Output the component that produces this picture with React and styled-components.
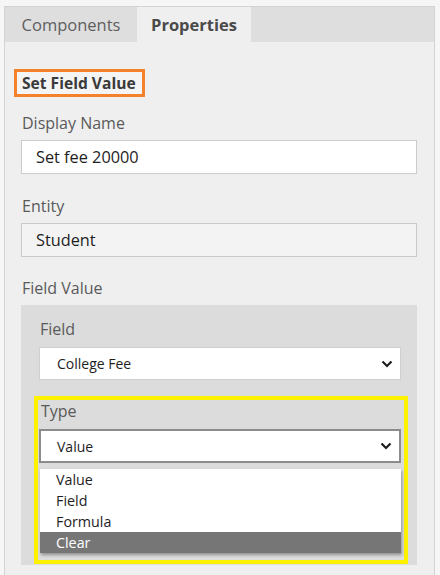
import React from "react";
import styled, { createGlobalStyle } from "styled-components";

const Global = createGlobalStyle`
  html, body { margin: 0; padding: 0; background: #f6f6f6; }
  body { font-family: "Open Sans", "Noto Sans", sans-serif; }
  * { box-sizing: border-box; }
`;

const Page = styled.div`
  width: 440px;
  height: 575px;
  padding: 6px 5px 0 4px;
  overflow: hidden;
`;

const Panel = styled.div`
  width: 431px;
  height: 580px;
  border: 1px solid #d3d3d3;
  border-bottom: none;
  background: #efefef;
  display: flex;
  flex-direction: column;
`;

const TabBar = styled.div`
  display: flex;
  height: 35px;
  background: #dedede;
`;

const Tab = styled.div`
  width: ${(p) => p.$w}px;
  display: flex;
  align-items: center;
  justify-content: center;
  font-size: 16.5px;
  color: ${(p) => (p.$active ? "#4a4a4a" : "#5e5e5e")};
  font-weight: ${(p) => (p.$active ? 700 : 400)};
  background: ${(p) => (p.$active ? "#efefef" : "#dedede")};
`;

const Body = styled.div`
  padding: 27px 17px 0 16px;
  display: flex;
  flex-direction: column;
`;

const TitleBox = styled.div`
  align-self: flex-start;
  margin-left: -7px;
  width: 131px;
  height: 28px;
  border: 3px solid #f5822a;
  background: #f4f4f4;
  display: flex;
  align-items: center;
  padding-left: 5px;
  font-size: 15.6px;
  font-weight: 700;
  color: #3a3a3a;
  white-space: nowrap;
  margin-bottom: 14px;
`;

const Label = styled.div`
  height: ${(p) => p.$h || 24}px;
  line-height: ${(p) => p.$h || 24}px;
  font-size: 16px;
  color: #5a5a5a;
  padding-left: ${(p) => p.$pl || 1}px;
  margin-bottom: ${(p) => p.$mb || 5}px;
`;

const Input = styled.div`
  height: 34px;
  background: ${(p) => (p.$disabled ? "#f3f3f3" : "#ffffff")};
  border: 1px solid ${(p) => (p.$disabled ? "#c9c9c9" : "#cccccc")};
  display: flex;
  align-items: center;
  padding-left: 14px;
  font-size: 16.3px;
  color: #1e1e1e;
  margin-bottom: ${(p) => p.$mb || 0}px;
`;

const Group = styled.div`
  background: #dcdcdc;
  padding: 12px 16px 1px 18px;
  display: flex;
  flex-direction: column;
`;

const Select = styled.div`
  height: ${(p) => (p.$focus ? 34 : 33)}px;
  background: #fff;
  border: ${(p) => (p.$focus ? "2px solid #8c8c8c" : "1px solid #cfcfcf")};
  display: flex;
  align-items: center;
  justify-content: space-between;
  padding: 0 7px 0 ${(p) => (p.$focus ? 16 : 17)}px;
  font-size: 14px;
  color: #1e1e1e;
  margin-bottom: ${(p) => p.$mb || 0}px;
`;

const Highlight = styled.div`
  margin: 0 -7px 0 -5px;
  border: 4px solid #fff200;
  padding: 0 3px 7px 1px;
  display: flex;
  flex-direction: column;
`;

const Menu = styled.div`
  margin-left: 1px;
  background: #fff;
  box-shadow: 1px 2px 3px rgba(0, 0, 0, 0.35);
  display: flex;
  flex-direction: column;
`;

const Item = styled.div`
  height: 21px;
  line-height: 22px;
  padding-left: 16px;
  font-size: 14.3px;
  color: ${(p) => (p.$sel ? "#ffffff" : "#1e1e1e")};
  background: ${(p) => (p.$sel ? "#767676" : "transparent")};
`;

const Chevron = () => (
  <svg width="12" height="8" viewBox="0 0 12 8">
    <path d="M1.5 1.5 L6 6 L10.5 1.5" fill="none" stroke="#1e1e1e" strokeWidth="2.2" />
  </svg>
);

export default function App() {
  return (
    <>
      <Global />
      <Page>
        <Panel>
          <TabBar>
            <Tab $w={132}>Components</Tab>
            <Tab $w={114} $active>Properties</Tab>
          </TabBar>
          <Body>
            <TitleBox>Set Field Value</TitleBox>
            <Label>Display Name</Label>
            <Input $mb={20}>Set fee 20000</Input>
            <Label>Entity</Label>
            <Input $disabled $mb={19}>Student</Input>
            <Label>Field Value</Label>
            <Group>
              <Label $mb={6}>Field</Label>
              <Select $mb={16}>
                <span>College Fee</span>
                <Chevron />
              </Select>
              <Highlight>
                <Label $h={22} $mb={7} $pl={2}>Type</Label>
                <Select $focus $mb={6}>
                  <span>Value</span>
                  <Chevron />
                </Select>
                <Menu>
                  <Item>Value</Item>
                  <Item>Field</Item>
                  <Item>Formula</Item>
                  <Item $sel>Clear</Item>
                </Menu>
              </Highlight>
            </Group>
          </Body>
        </Panel>
      </Page>
    </>
  );
}
